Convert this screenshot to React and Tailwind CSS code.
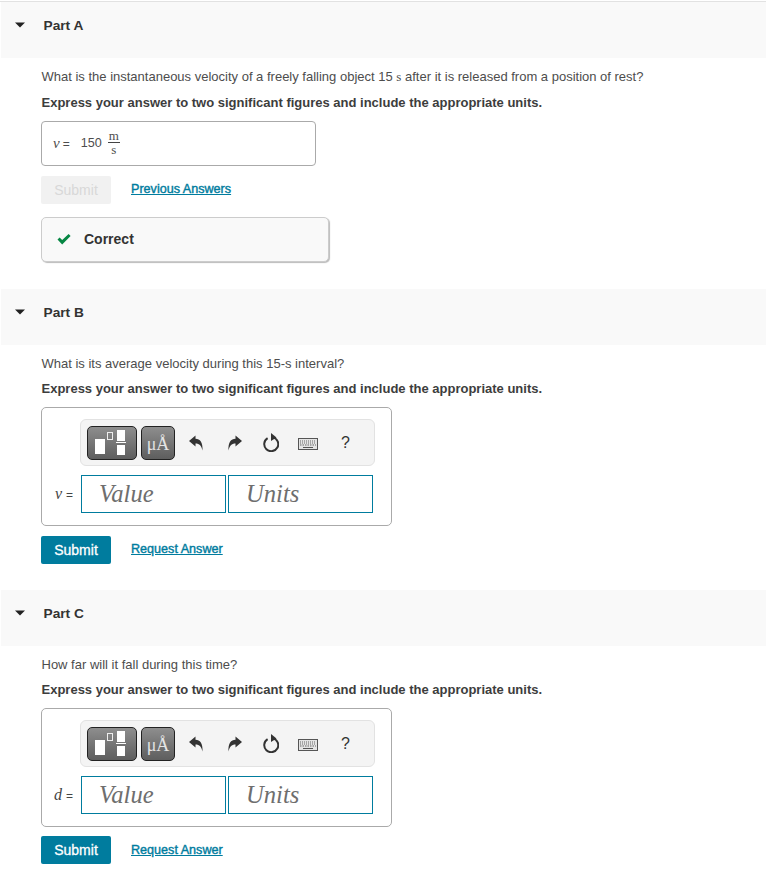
const sans = 'font-["Liberation_Sans",Arial,sans-serif]';

function PartHeader({ title, className }) {
  return (
    <div className={`ml-px flex h-[56px] items-start bg-[#f9f9f9] pt-[15px] ${className}`}>
      <svg width="10" height="6" viewBox="0 0 10 6" className="ml-[14px] mt-[5px]">
        <path d="M0 0.5h10L5 5.5z" fill="#222" />
      </svg>
      <span className="ml-[18.5px] mt-px text-[13.7px] font-bold leading-[16px] text-[#333]">{title}</span>
    </div>
  );
}

function Prompt({ children, className, gap = "mt-[9px]" }) {
  return (
    <div className={className}>
      <p className="h-[16px] text-[13px] leading-[16px] text-[#4d4d4d]">{children}</p>
      <p className={`${gap} h-[16px] text-[13px] font-bold leading-[16px] text-[#3d3d3d]`}>
        Express your answer to two significant figures and include the appropriate units.
      </p>
    </div>
  );
}

function TemplateIcon() {
  return (
    <svg width="34" height="26" viewBox="0 0 34 26">
      <rect x="0" y="9" width="10" height="15" fill="#fff" />
      <rect x="12.5" y="2.5" width="5" height="7" fill="none" stroke="#eee" strokeWidth="1" />
      <rect x="22" y="0" width="8" height="11" fill="#fff" />
      <rect x="21" y="12" width="10" height="1" fill="#fff" />
      <rect x="22" y="15" width="8" height="10" fill="#fff" />
    </svg>
  );
}

function Undo({ flip }) {
  return (
    <svg width="14" height="16" viewBox="0 0 14 16" className={flip ? "-scale-x-100" : ""}>
      <path d="M0 6L6.5 0.5V3.8C11 3.8 14 7.5 13.5 15.5C12.5 11 10.5 8.5 6.5 8.5V11.5z" fill="#333" />
    </svg>
  );
}

function Reset() {
  return (
    <svg width="16" height="19" viewBox="0 0 16 19">
      <path d="M4.6 5.2A7 7 0 1 0 10 4.4" fill="none" stroke="#333" strokeWidth="2" />
      <path d="M8 0L13.5 4.5L8 8z" fill="#333" />
    </svg>
  );
}

function Keyboard() {
  return (
    <svg width="20" height="12" viewBox="0 0 20 12">
      <rect x="0.5" y="0.5" width="19" height="11" fill="#e4e4e4" stroke="#555" />
      <path d="M2 3h16M2 5h16" stroke="#666" strokeWidth="1" strokeDasharray="1 1" />
      <path d="M2 7h16" stroke="#666" strokeWidth="1" strokeDasharray="1.5 1" />
      <path d="M5 9.5h10" stroke="#555" strokeWidth="1" />
    </svg>
  );
}

function Toolbar() {
  const dark = "flex h-[34px] items-center justify-center rounded-[5px] border border-[#222] bg-linear-to-b from-[#8e8e8e] to-[#5e5e5e]";
  return (
    <div className="ml-[38px] flex h-[47px] w-[295px] items-center rounded-[6px] border border-[#e2e2e2] bg-[#f4f4f4] pl-[6px]">
      <div className={`${dark} w-[50px]`}><TemplateIcon /></div>
      <div className={`${dark} ml-[4px] w-[34px] font-["Liberation_Serif",serif] text-[18px] text-[#e4e4e4]`}>
        <span className="mt-[3px]">μÅ</span>
      </div>
      <div className="ml-[14px]"><Undo /></div>
      <div className="ml-[25px]"><Undo flip /></div>
      <div className="ml-[21px]"><Reset /></div>
      <div className="ml-[19px] mt-[3px]"><Keyboard /></div>
      <span className="ml-[23px] text-[16px] text-[#333]">?</span>
    </div>
  );
}

function AnswerBox({ symbol, className }) {
  const field = "flex h-[38px] w-[145px] items-center border border-[#007c9e] pl-[17px] font-['Liberation_Serif',serif] text-[24.6px] italic text-[#6e6e6e]";
  return (
    <div className={`ml-[41px] h-[119px] w-[351px] rounded-[5px] border border-[#aaa] pt-[11px] ${className}`}>
      <Toolbar />
      <div className="mt-[9px] flex items-center">
        <span className="flex w-[39px] items-baseline justify-end pr-[8px] text-[12px] text-[#444]">
          <i className="font-['Liberation_Serif',serif] text-[16px]">{symbol}</i>
          <span className="ml-[4px]">=</span>
        </span>
        <div className={field}>Value</div>
        <div className={`${field} ml-[2px]`}>Units</div>
      </div>
    </div>
  );
}

function Actions({ label, disabled, className, linkTop = "mt-[5px]" }) {
  return (
    <div className={`ml-[41px] flex items-start ${className}`}>
      <button
        className={`h-[28px] w-[70px] rounded-[2px] text-[14px] ${
          disabled ? "bg-[#f1f1f1] text-[#d8d8d8]" : "bg-[#007c9e] text-white [-webkit-text-stroke:0.3px_white]"
        }`}
      >
        Submit
      </button>
      <a className={`ml-[20px] ${linkTop} text-[12.6px] leading-[16px] text-[#007c9e] underline [-webkit-text-stroke:0.4px_#007c9e]`}>{label}</a>
    </div>
  );
}

export default function App() {
  return (
    <div className={`min-h-[871px] w-[766px] bg-white ${sans}`}>
      <div className="h-[2px] border-b border-[#e2e2e2]" />

      {/* Part A */}
      <PartHeader title="Part A" />
      <Prompt className="ml-[41.5px] mt-[11px]" gap="mt-[10px]">
        What is the instantaneous velocity of a freely falling object 15{" "}
        <span className="font-['Liberation_Serif',serif]">s</span> after it is released from a position of rest?
      </Prompt>
      <div className="ml-[41px] mt-[10px] flex h-[45px] w-[275px] items-center rounded-[4px] border border-[#aaa] pl-[11px] text-[#4d4d4d]">
        <span className="flex items-baseline text-[12px]">
          <i className="font-['Liberation_Serif',serif] text-[15px]">v</i>
          <span className="ml-[3px]">=</span>
        </span>
        <span className="ml-[11px] text-[12.6px]">150</span>
        <span className="mb-[2px] ml-[6px] flex flex-col items-center font-['Liberation_Serif',serif] text-[13px] leading-[10px]">
          <span className="border-b border-[#444] px-px pb-px">m</span>
          <span className="pt-[2px]">s</span>
        </span>
      </div>
      <Actions label="Previous Answers" disabled className="mt-[10px]" />
      <div className="ml-[41px] mt-[13px] flex h-[45px] w-[288px] items-center rounded-[5px] border border-[#ccc] bg-[#f9f9f9] pl-[15px] shadow-[1px_1px_1px_#bbb]">
        <svg width="14" height="11" viewBox="0 0 14 11">
          <path d="M0.5 5.5L2.6 3.4L5.2 6L11.6 0L13.6 2.1L5.2 10.4z" fill="#078744" />
        </svg>
        <span className="ml-[13px] text-[14px] font-bold text-[#333]">Correct</span>
      </div>

      {/* Part B */}
      <PartHeader title="Part B" className="mt-[27px]" />
      <Prompt className="ml-[41.5px] mt-[11px]">What is its average velocity during this 15-s interval?</Prompt>
      <AnswerBox symbol="v" className="mt-[10px]" />
      <Actions label="Request Answer" className="mt-[10px]" />

      {/* Part C */}
      <PartHeader title="Part C" className="mt-[26px]" />
      <Prompt className="ml-[41.5px] mt-[11px]">How far will it fall during this time?</Prompt>
      <AnswerBox symbol="d" className="mt-[10px]" />
      <Actions label="Request Answer" className="mt-[9px]" linkTop="mt-[6px]" />
    </div>
  );
}
